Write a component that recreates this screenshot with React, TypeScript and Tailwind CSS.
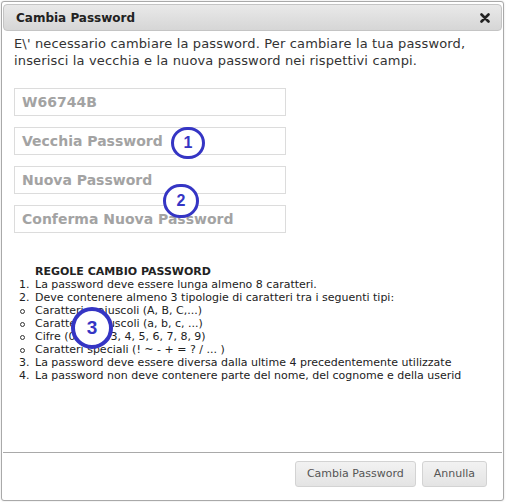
import React from 'react'

const rules = [
  { mark: '1.', text: 'La password deve essere lunga almeno 8 caratteri.' },
  { mark: '2.', text: 'Deve contenere almeno 3 tipologie di caratteri tra i seguenti tipi:' },
  { mark: 'o', text: 'Caratteri maiuscoli (A, B, C,...)' },
  { mark: 'o', text: 'Caratteri minuscoli (a, b, c, ...)' },
  { mark: 'o', text: 'Cifre (0, 1, 2, 3, 4, 5, 6, 7, 8, 9)' },
  { mark: 'o', text: 'Caratteri speciali (! ~ - + = ? / ... )' },
  { mark: '3.', text: 'La password deve essere diversa dalla ultime 4 precedentemente utilizzate' },
  { mark: '4.', text: 'La password non deve contenere parte del nome, del cognome e della userid' },
]

const fields = ['W66744B', 'Vecchia Password', 'Nuova Password', 'Conferma Nuova Password']

const Badge = ({ n, className }: { n: string; className: string }) => (
  <div
    className={`absolute flex items-center justify-center rounded-full bg-white border-[#3535c4] text-[#3535c4] font-bold font-['Liberation_Sans',Arial,sans-serif] ${className}`}
  >
    {n}
  </div>
)

export default function App() {
  return (
    <div className="w-[506px] h-[502px] bg-white pt-px pl-px font-['DejaVu_Sans',Verdana,sans-serif]">
      <div className="relative w-[503px] h-[500px] border border-[#a9a9a9] rounded-[3px] bg-white flex flex-col shadow-[0_0_2px_rgba(0,0,0,0.15)]">
        {/* Title bar */}
        <div className="mx-px mt-[2px] h-[27px] flex items-center justify-between px-3 rounded-[4px] border border-[#c4c4c4] bg-gradient-to-b from-[#e9e9e9] to-[#d6d6d6]">
          <span className="text-[12px] font-bold text-[#222]">Cambia Password</span>
          <svg width="10" height="10" viewBox="0 0 10 10" className="mr-[-1px]">
            <path d="M1.5 1.5 L8.5 8.5 M8.5 1.5 L1.5 8.5" stroke="#222" strokeWidth="2.6" strokeLinecap="round" />
          </svg>
        </div>

        {/* Body */}
        <div className="flex-1 px-3 pt-[4px]">
          <p className="text-[13px] leading-[17px] text-[#333] tracking-[0.15px]">
            E\' necessario cambiare la password. Per cambiare la tua password, inserisci la vecchia e la nuova password nei rispettivi campi.
          </p>

          <div className="mt-[19px] flex flex-col gap-[11px]">
            {fields.map((f) => (
              <div
                key={f}
                className="w-[272px] h-[28px] border border-[#dcdcdc] flex items-center px-[7px] text-[14px] font-bold text-[#a3a3a3]"
              >
                {f}
              </div>
            ))}
          </div>

          <div className="mt-[32px] pl-[5px] text-[11px] leading-[13px] text-[#222]">
            <div className="pl-[16px] font-bold">REGOLE CAMBIO PASSWORD</div>
            {rules.map((r, i) => (
              <div key={i} className="flex items-center">
                <span className="w-[16px] shrink-0">
                  {r.mark === 'o' ? (
                    <span className="block w-[5px] h-[5px] ml-[1px] mt-[1px] rounded-full border border-[#333]" />
                  ) : (
                    r.mark
                  )}
                </span>
                <span>{r.text}</span>
              </div>
            ))}
          </div>
        </div>

        {/* Footer */}
        <div className="mx-px h-[48px] border-t border-[#a9a9a9] flex items-start justify-end gap-[6px] pt-[8px] pr-[15px]">
          <button className="h-[26px] px-[11px] rounded-[3px] border border-[#d3d3d3] bg-gradient-to-b from-[#f2f2f2] to-[#e4e4e4] text-[11px] text-[#555]">
            Cambia Password
          </button>
          <button className="h-[26px] px-[11px] rounded-[3px] border border-[#d3d3d3] bg-gradient-to-b from-[#f2f2f2] to-[#e4e4e4] text-[11px] text-[#555]">
            Annulla
          </button>
        </div>

        {/* Annotation markers */}
        <Badge n="1" className="left-[169px] top-[125px] w-[34px] h-[32px] border-[3px] text-[16px]" />
        <Badge n="2" className="left-[161px] top-[182px] w-[36px] h-[34px] border-[3px] text-[16px]" />
        <Badge n="3" className="left-[69px] top-[305px] w-[42px] h-[42px] border-[4px] text-[19px]" />
      </div>
    </div>
  )
}
